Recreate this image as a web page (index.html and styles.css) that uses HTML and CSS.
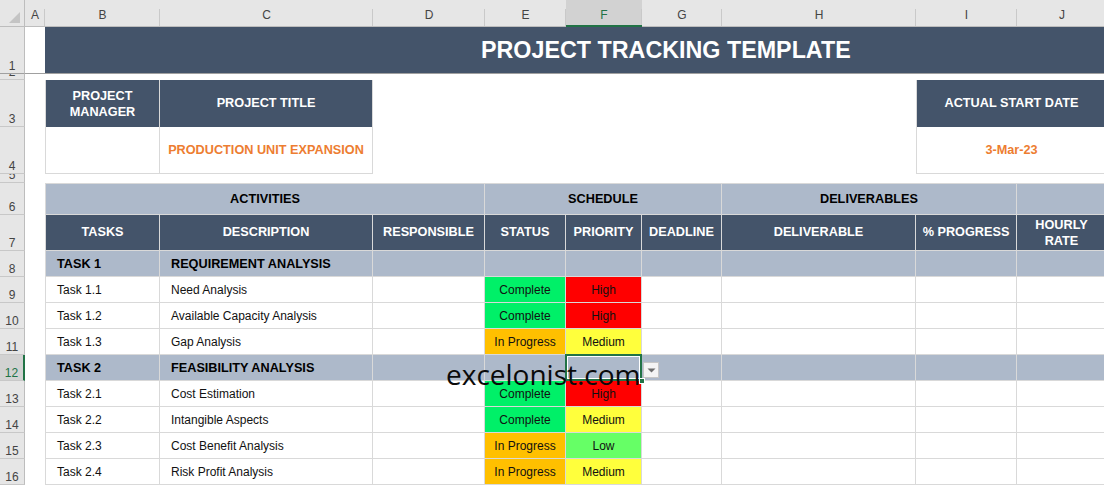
FILE: index.html
```html
<!DOCTYPE html>
<html lang="en">
<head>
<meta charset="utf-8">
<title>Project Tracking Template</title>
<link rel="stylesheet" href="styles.css">
</head>
<body>
<div class="sheet">
  <!-- column headers -->
  <div class="corner"><svg width="12" height="12" viewBox="0 0 12 12"><path d="M12 1 L12 12 L1 12 Z" fill="#c4c4c4"/></svg></div>
  <div class="ch">A</div>
  <div class="ch">B</div>
  <div class="ch">C</div>
  <div class="ch">D</div>
  <div class="ch">E</div>
  <div class="ch ch-sel">F</div>
  <div class="ch">G</div>
  <div class="ch">H</div>
  <div class="ch">I</div>
  <div class="ch">J</div>

  <!-- row 1 -->
  <div class="rh frz">1</div>
  <div class="frz"></div>
  <div class="title frz span9">PROJECT TRACKING TEMPLATE</div>

  <!-- row 2 -->
  <div class="rh">2</div>
  <div class="span10"></div>

  <!-- row 3 -->
  <div class="rh">3</div>
  <div></div>
  <div class="hd hd-top first two">PROJECT<br>MANAGER</div>
  <div class="hd hd-top">PROJECT TITLE</div>
  <div class="span5"></div>
  <div class="hd hd-top first span2">ACTUAL START DATE</div>

  <!-- row 4 -->
  <div class="rh">4</div>
  <div></div>
  <div class="box first"></div>
  <div class="box orange">PRODUCTION UNIT EXPANSION</div>
  <div class="span5"></div>
  <div class="box orange first span2">3-Mar-23</div>

  <!-- row 5 -->
  <div class="rh">5</div>
  <div class="span10"></div>

  <!-- row 6 -->
  <div class="rh">6</div>
  <div></div>
  <div class="grp first span3">ACTIVITIES</div>
  <div class="grp span3">SCHEDULE</div>
  <div class="grp span2">DELIVERABLES</div>
  <div class="grp"></div>

  <!-- row 7 -->
  <div class="rh">7</div>
  <div></div>
  <div class="hd first">TASKS</div>
  <div class="hd">DESCRIPTION</div>
  <div class="hd">RESPONSIBLE</div>
  <div class="hd">STATUS</div>
  <div class="hd">PRIORITY</div>
  <div class="hd">DEADLINE</div>
  <div class="hd">DELIVERABLE</div>
  <div class="hd">% PROGRESS</div>
  <div class="hd two">HOURLY<br>RATE</div>

  <!-- row 8 -->
  <div class="rh">8</div>
  <div></div>
  <div class="band first">TASK 1</div>
  <div class="band">REQUIREMENT ANALYSIS</div>
  <div class="band"></div><div class="band"></div><div class="band"></div><div class="band"></div><div class="band"></div><div class="band"></div><div class="band"></div>

  <!-- row 9 -->
  <div class="rh">9</div>
  <div></div>
  <div class="c first">Task 1.1</div>
  <div class="c">Need Analysis</div>
  <div class="c"></div>
  <div class="c st complete">Complete</div>
  <div class="c st high">High</div>
  <div class="c"></div><div class="c"></div><div class="c"></div><div class="c"></div>

  <!-- row 10 -->
  <div class="rh">10</div>
  <div></div>
  <div class="c first">Task 1.2</div>
  <div class="c">Available Capacity Analysis</div>
  <div class="c"></div>
  <div class="c st complete">Complete</div>
  <div class="c st high">High</div>
  <div class="c"></div><div class="c"></div><div class="c"></div><div class="c"></div>

  <!-- row 11 -->
  <div class="rh">11</div>
  <div></div>
  <div class="c first">Task 1.3</div>
  <div class="c">Gap Analysis</div>
  <div class="c"></div>
  <div class="c st progress">In Progress</div>
  <div class="c st medium">Medium</div>
  <div class="c"></div><div class="c"></div><div class="c"></div><div class="c"></div>

  <!-- row 12 -->
  <div class="rh rh-sel">12</div>
  <div></div>
  <div class="band first">TASK 2</div>
  <div class="band">FEASIBILITY ANALYSIS</div>
  <div class="band"></div>
  <div class="band"></div>
  <div class="band sel">
    <div class="selbox"></div>
    <div class="handle"></div>
    <div class="dd"><svg width="9" height="5" viewBox="0 0 9 5"><path d="M0.5 0.5 H8.5 L4.5 4.5 Z" fill="#6d6d6d"/></svg></div>
  </div>
  <div class="band"></div><div class="band"></div><div class="band"></div><div class="band"></div>

  <!-- row 13 -->
  <div class="rh">13</div>
  <div></div>
  <div class="c first">Task 2.1</div>
  <div class="c">Cost Estimation</div>
  <div class="c"></div>
  <div class="c st complete">Complete</div>
  <div class="c st high">High</div>
  <div class="c"></div><div class="c"></div><div class="c"></div><div class="c"></div>

  <!-- row 14 -->
  <div class="rh">14</div>
  <div></div>
  <div class="c first">Task 2.2</div>
  <div class="c">Intangible Aspects</div>
  <div class="c"></div>
  <div class="c st complete">Complete</div>
  <div class="c st medium">Medium</div>
  <div class="c"></div><div class="c"></div><div class="c"></div><div class="c"></div>

  <!-- row 15 -->
  <div class="rh">15</div>
  <div></div>
  <div class="c first">Task 2.3</div>
  <div class="c">Cost Benefit Analysis</div>
  <div class="c"></div>
  <div class="c st progress">In Progress</div>
  <div class="c st low">Low</div>
  <div class="c"></div><div class="c"></div><div class="c"></div><div class="c"></div>

  <!-- row 16 -->
  <div class="rh">16</div>
  <div></div>
  <div class="c first">Task 2.4</div>
  <div class="c">Risk Profit Analysis</div>
  <div class="c"></div>
  <div class="c st progress">In Progress</div>
  <div class="c st medium">Medium</div>
  <div class="c"></div><div class="c"></div><div class="c"></div><div class="c"></div>
</div>
<div class="watermark">excelonist.com</div>
</body>
</html>
```

FILE: styles.css
```css
* { box-sizing: border-box; margin: 0; padding: 0; }
html, body { width: 1104px; height: 485px; overflow: hidden; background: #fff; }
body { font-family: "Liberation Sans", Arial, sans-serif; position: relative; color: #000; }

.sheet {
  display: grid;
  grid-template-columns: 25px 20px 115px 213px 112px 81px 76px 80px 194px 101px 90px;
  grid-template-rows: 27px 47px 6px 47px 47px 9px 32px 36px 26px repeat(8, 26px);
  width: 1107px;
}

.span2 { grid-column: span 2; }
.span3 { grid-column: span 3; }
.span5 { grid-column: span 5; }
.span9 { grid-column: span 9; }
.span10 { grid-column: span 10; }

/* column headers */
.corner {
  background: #e6e6e6;
  border-right: 1px solid #bdbdbd;
  border-bottom: 1px solid #bdbdbd;
  display: flex;
  align-items: flex-end;
  justify-content: flex-end;
  padding: 0 4px 3px 0;
}
.ch {
  background: linear-gradient(#c9c9c9, #c9c9c9) right 9px / 1px 18px no-repeat, #e6e6e6;
  border-bottom: 1px solid #bdbdbd;
  font-size: 12px;
  line-height: 14px;
  color: #444;
  display: flex;
  align-items: flex-end;
  justify-content: center;
  padding-bottom: 4px;
}
.ch-sel {
  background: linear-gradient(#c9c9c9, #c9c9c9) right 9px / 1px 18px no-repeat, #d2d2d2;
  color: #217346;
  border-bottom: 2px solid #217346;
  padding-bottom: 3px;
}

/* row headers */
.rh {
  background: #e6e6e6;
  border-right: 1px solid #bdbdbd;
  border-bottom: 1px solid #c8c8c8;
  font-size: 12px;
  line-height: 14px;
  color: #444;
  display: flex;
  align-items: flex-end;
  justify-content: center;
  overflow: hidden;
}
.rh-sel {
  background: #d2d2d2;
  color: #217346;
  border-right: 2px solid #217346;
}
.frz { border-bottom: 1px solid #a0a0a0; }

/* title */
.title {
  background: #44546a;
  color: #fff;
  font-weight: bold;
  font-size: 23.3px;
  display: flex;
  align-items: center;
  padding-left: 436px;
  white-space: nowrap;
  overflow: hidden;
}

/* dark headers */
.hd {
  background: #44546a;
  color: #fff;
  font-weight: bold;
  font-size: 12.7px;
  display: flex;
  align-items: center;
  justify-content: center;
  text-align: center;
  border-right: 1px solid #d9d9d9;
  border-bottom: 1px solid #d9d9d9;
  white-space: nowrap;
  line-height: 17px;
}
.hd-top { border-bottom: 0; }
.hd.two { line-height: 16px; }

.first { border-left: 1px solid #d9d9d9; }

/* project info boxes */
.box {
  border-right: 1px solid #d9d9d9;
  border-bottom: 1px solid #d9d9d9;
  display: flex;
  align-items: center;
  justify-content: center;
  font-size: 12.7px;
  font-weight: bold;
}
.orange { color: #ed7d31; }

/* group band */
.grp {
  background: #adb9ca;
  border-top: 1px solid #d9d9d9;
  border-right: 1px solid #d9d9d9;
  border-bottom: 1px solid #d9d9d9;
  font-weight: bold;
  font-size: 12.7px;
  display: flex;
  align-items: center;
  justify-content: center;
}

/* task bands */
.band {
  background: #adb9ca;
  border-right: 1px solid #d9d9d9;
  border-bottom: 1px solid #d9d9d9;
  font-weight: bold;
  font-size: 12.7px;
  display: flex;
  align-items: center;
  padding-left: 11px;
  white-space: nowrap;
}

/* data cells */
.c {
  border-right: 1px solid #d9d9d9;
  border-bottom: 1px solid #d9d9d9;
  font-size: 12px;
  display: flex;
  align-items: center;
  padding-left: 11px;
  white-space: nowrap;
  color: #111;
}
.st { justify-content: center; padding-left: 0; }
.complete { background: #00f068; }
.high { background: #ff0000; }
.medium { background: #ffff3c; }
.low { background: #66ff66; }
.progress { background: #ffc000; }

/* selected cell */
.sel { position: relative; padding-left: 0; }
.selbox {
  position: absolute;
  left: -1px; top: -1px; right: -1px; bottom: -1px;
  border: 2px solid #217346;
  box-shadow: inset 0 0 0 1px #fff;
}
.handle {
  position: absolute;
  right: -4px; bottom: -4px;
  width: 6px; height: 6px;
  background: #217346;
  border: 1px solid #fff;
}
.dd {
  position: absolute;
  left: 77px; top: 7px;
  width: 16px; height: 16px;
  background: #f4f4f4;
  border: 1px solid #c6c6c6;
  display: flex;
  align-items: center;
  justify-content: center;
  z-index: 2;
}

/* watermark */
.watermark {
  position: absolute;
  left: 446px;
  top: 360px;
  font-family: "Open Sans", "Liberation Sans", sans-serif;
  font-size: 28px;
  line-height: 28px;
  color: #0a0a0a;
  z-index: 5;
  white-space: nowrap;
}
```
